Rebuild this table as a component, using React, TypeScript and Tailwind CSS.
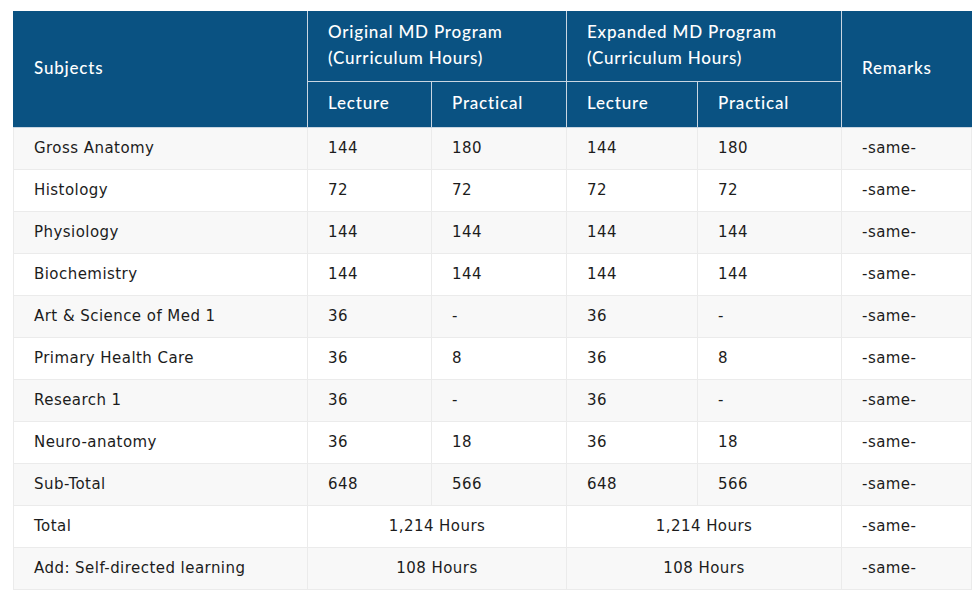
const rows: [string, string, string, string, string][] = [
  ['Gross Anatomy', '144', '180', '144', '180'],
  ['Histology', '72', '72', '72', '72'],
  ['Physiology', '144', '144', '144', '144'],
  ['Biochemistry', '144', '144', '144', '144'],
  ['Art & Science of Med 1', '36', '-', '36', '-'],
  ['Primary Health Care', '36', '8', '36', '8'],
  ['Research 1', '36', '-', '36', '-'],
  ['Neuro-anatomy', '36', '18', '36', '18'],
  ['Sub-Total', '648', '566', '648', '566'],
];

const th = 'border border-[#c9d6e2] px-[20px] pb-[4px] text-left font-medium align-middle';
const td = 'border border-[#ebebeb] px-[20px] h-[42px] align-middle';

export default function App() {
  return (
    <div className="w-[980px] h-[616px] bg-white pt-[11px] pl-[13px]">
      <table
        className="border-collapse table-fixed w-[958px] text-[15px] tracking-[0.45px] text-[#1c1c1c]"
        style={{ fontFamily: '"DejaVu Sans", sans-serif' }}
      >
        <colgroup>
          <col className="w-[294px]" />
          <col className="w-[124px]" />
          <col className="w-[135px]" />
          <col className="w-[131px]" />
          <col className="w-[144px]" />
          <col className="w-[130px]" />
        </colgroup>
        <thead
          className="bg-[#0a5282] text-white text-[17px] tracking-[0.8px]"
          style={{ fontFamily: 'Lato, sans-serif' }}
        >
          <tr className="h-[70px]">
            <th rowSpan={2} className={th + ' border-l-[#0a5282] border-t-[#0a5282]'}>
              Subjects
            </th>
            <th colSpan={2} className={th + ' leading-[26px] border-t-[#0a5282]'}>
              Original MD Program
              <br />
              (Curriculum Hours)
            </th>
            <th colSpan={2} className={th + ' leading-[26px] border-t-[#0a5282]'}>
              Expanded MD Program
              <br />
              (Curriculum Hours)
            </th>
            <th rowSpan={2} className={th + ' border-r-[#0a5282] border-t-[#0a5282]'}>
              Remarks
            </th>
          </tr>
          <tr className="h-[46px]">
            <th className={th}>Lecture</th>
            <th className={th}>Practical</th>
            <th className={th}>Lecture</th>
            <th className={th}>Practical</th>
          </tr>
        </thead>
        <tbody>
          {rows.map((r, i) => (
            <tr key={r[0]} className={i % 2 === 0 ? 'bg-[#f8f8f8]' : 'bg-white'}>
              {r.map((c, j) => (
                <td key={j} className={td}>
                  {c}
                </td>
              ))}
              <td className={td}>-same-</td>
            </tr>
          ))}
          <tr className="bg-white">
            <td className={td}>Total</td>
            <td colSpan={2} className={td + ' text-center'}>
              1,214 Hours
            </td>
            <td colSpan={2} className={td + ' text-center'}>
              1,214 Hours
            </td>
            <td className={td}>-same-</td>
          </tr>
          <tr className="bg-[#f8f8f8]">
            <td className={td}>Add: Self-directed learning</td>
            <td colSpan={2} className={td + ' text-center'}>
              108 Hours
            </td>
            <td colSpan={2} className={td + ' text-center'}>
              108 Hours
            </td>
            <td className={td}>-same-</td>
          </tr>
        </tbody>
      </table>
    </div>
  );
}
